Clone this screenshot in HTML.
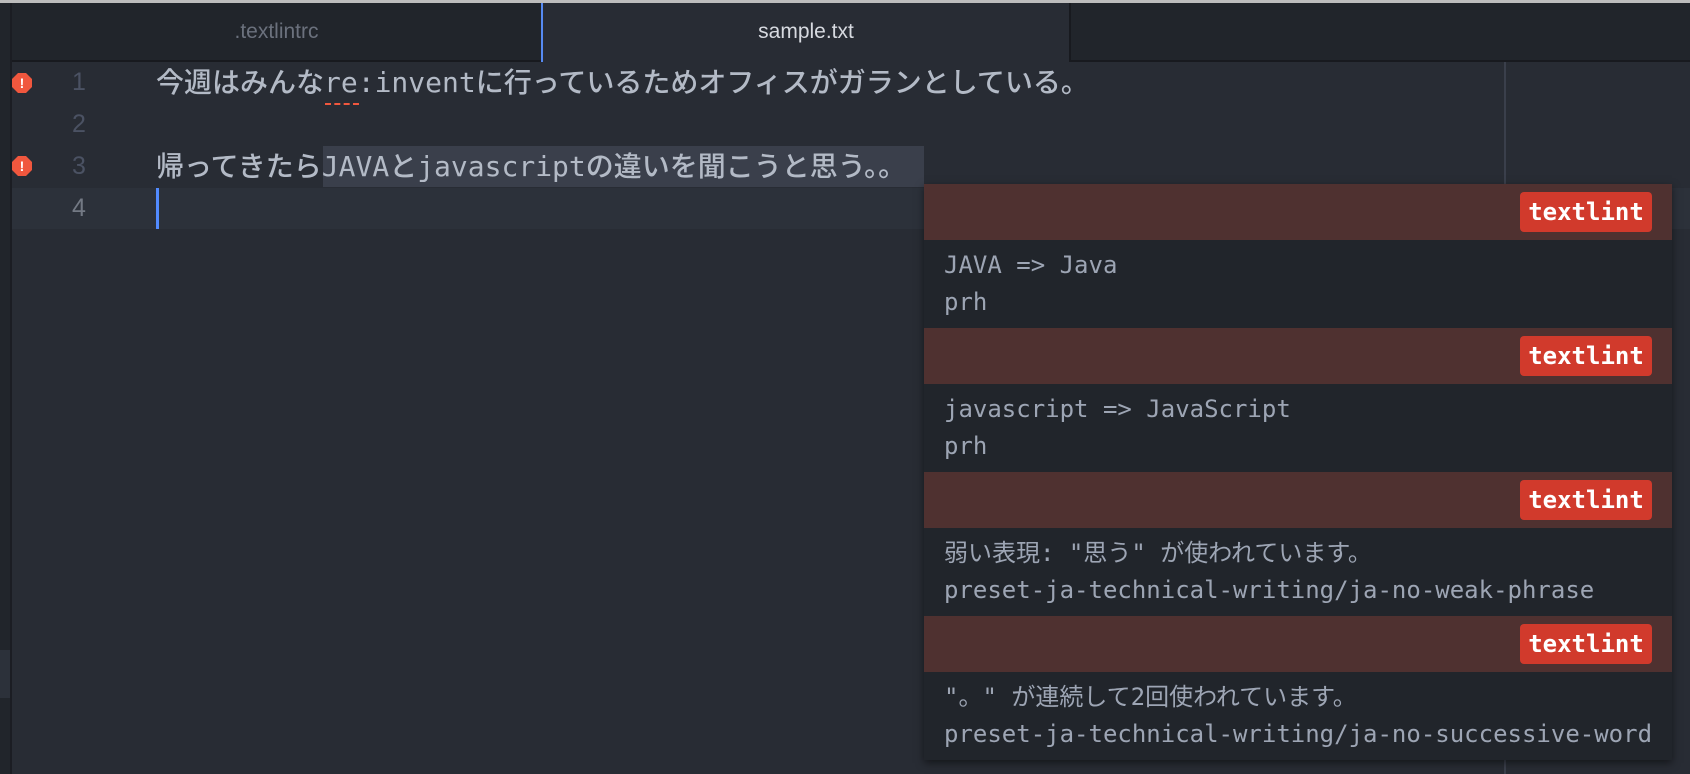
<!DOCTYPE html>
<html><head><meta charset="utf-8"><style>
*{margin:0;padding:0;box-sizing:border-box}
body{width:1690px;height:774px;overflow:hidden;background:#282c34;position:relative;font-family:"Liberation Sans","Noto Sans CJK JP",sans-serif}
.a{position:absolute}
.mono{font-family:"DejaVu Sans Mono","Liberation Mono","Noto Sans CJK JP",monospace}
.ln{position:absolute;left:64px;width:30px;text-align:center;font-size:25px;color:#4b5263;line-height:41px}
.code{position:absolute;left:156px;font-size:28px;color:#b3bac6;line-height:41px;white-space:pre;font-weight:500}
.err{position:absolute;left:12px;width:20px;height:20px;background:#f0573e;clip-path:polygon(30% 0,70% 0,100% 30%,100% 70%,70% 100%,30% 100%,0 70%,0 30%);color:#fff;font:bold 14px "Liberation Sans",sans-serif;text-align:center;line-height:20px}
.hd{position:absolute;left:0;width:748px;height:56px;background:#4f3130}
.badge{position:absolute;right:20px;top:8px;width:132px;height:40px;background:#d13a2c;border-radius:4px;color:#fff;font-weight:bold;font-size:24px;text-align:center;line-height:40px}
.bd{position:absolute;left:0;width:748px;height:88px;background:#21252b;color:#9da5b4;font-size:24px;padding-left:20px;white-space:pre}
.bd div{line-height:37px}
</style></head><body>
<div class="a" style="left:0;top:0;width:1690px;height:3px;background:#bdbdbd"></div>
<div class="a" style="left:0;top:3px;width:1690px;height:57px;background:#21252b"></div>
<div class="a" style="left:0;top:60px;width:1690px;height:2px;background:#181a1f"></div>
<div class="a" style="left:0;top:3px;width:11px;height:771px;background:#21252b"></div>
<div class="a" style="left:10px;top:3px;width:2px;height:771px;background:#1b1d23"></div>
<div class="a" style="left:0;top:650px;width:10px;height:48px;background:#2c313a"></div>
<div class="a" style="left:12px;top:3px;width:529px;height:57px;color:#6b717d;font-size:21px;text-align:center;line-height:57px">.textlintrc</div>
<div class="a" style="left:541px;top:3px;width:528px;height:59px;background:#282c34;border-left:2px solid #568af2;color:#d7dae0;font-size:21px;text-align:center;line-height:57px">sample.txt</div>
<div class="a" style="left:1069px;top:3px;width:2px;height:57px;background:#181a1f"></div>
<div class="a" style="left:1504px;top:62px;width:2px;height:712px;background:#3a3f4b"></div>
<div class="a" style="left:12px;top:188px;width:1678px;height:41px;background:#2c313a"></div>
<div class="a" style="left:323px;top:146px;width:601px;height:41px;background:#3a3f4b"></div>
<div class="a" style="left:156px;top:188px;width:3px;height:41px;background:#528bff"></div>
<div class="err" style="top:73px">!</div>
<div class="err" style="top:156px">!</div>
<div class="ln" style="top:62px">1</div>
<div class="ln" style="top:104px">2</div>
<div class="ln" style="top:146px">3</div>
<div class="ln" style="top:188px;color:#737984">4</div>
<div class="code mono" style="top:62px">今週はみんなre:inventに行っているためオフィスがガランとしている。</div>
<div class="a" style="left:325px;top:103px;width:34px;height:0;border-top:2px dashed #f0573e"></div>
<div class="code mono" style="top:146px">帰ってきたらJAVAとjavascriptの違いを聞こうと思う。。</div>
<div class="a mono" style="left:924px;top:184px;width:748px;height:576px;box-shadow:0 3px 8px rgba(0,0,0,.5)">
<div class="hd" style="top:0"><div class="badge">textlint</div></div>
<div class="bd" style="top:56px;padding-top:7px"><div>JAVA =&gt; Java</div><div>prh</div></div>
<div class="hd" style="top:144px"><div class="badge">textlint</div></div>
<div class="bd" style="top:200px;padding-top:7px"><div>javascript =&gt; JavaScript</div><div>prh</div></div>
<div class="hd" style="top:288px"><div class="badge">textlint</div></div>
<div class="bd" style="top:344px;padding-top:7px"><div>弱い表現: "思う" が使われています。</div><div>preset-ja-technical-writing/ja-no-weak-phrase</div></div>
<div class="hd" style="top:432px"><div class="badge">textlint</div></div>
<div class="bd" style="top:488px;padding-top:7px"><div>"。" が連続して2回使われています。</div><div>preset-ja-technical-writing/ja-no-successive-word</div></div>
</div>
</body></html>
